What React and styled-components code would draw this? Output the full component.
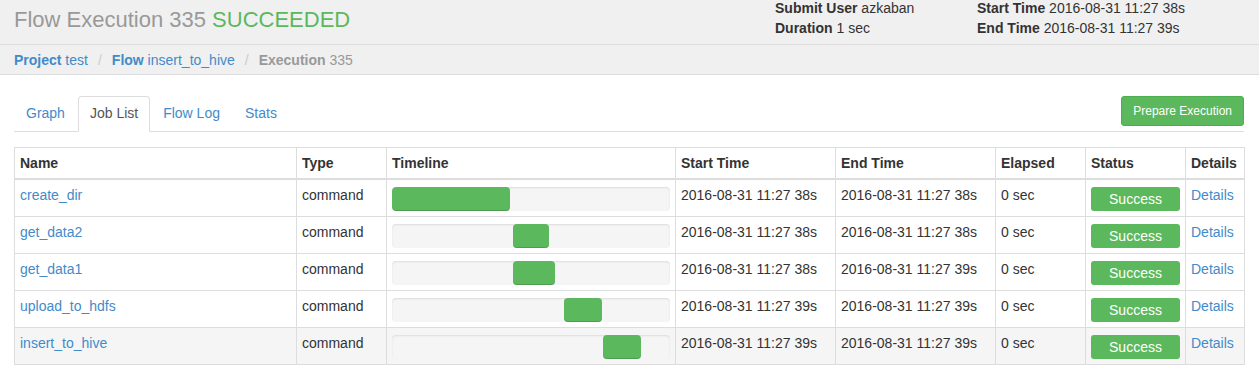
import React from 'react';
import styled, { createGlobalStyle } from 'styled-components';

const GlobalStyle = createGlobalStyle`
  * { box-sizing: border-box; }
  body {
    margin: 0;
    background: #fff;
    color: #333;
    font-family: "Liberation Sans", Arial, sans-serif;
    font-size: 14px;
    line-height: 20px;
  }
`;

const Header = styled.div`
  display: grid;
  grid-template-columns: 761px 202px auto;
  height: 45px;
  padding: 0 14px;
  background: #f0f0f0;
  border-bottom: 1px solid #ddd;
`;

const Title = styled.h1`
  margin: 8px 0 0;
  font-size: 22px;
  line-height: 24px;
  font-weight: normal;
  color: #999;
`;

const Succeeded = styled.span`
  color: #5cb85c;
`;

const InfoCol = styled.div`
  margin-top: -2px;
  white-space: nowrap;
`;

const Label = styled.strong`
  font-weight: bold;
`;

const Crumbs = styled.div`
  height: 30px;
  padding: 5px 14px 4px;
  background: #f0f0f0;
  border-bottom: 1px solid #ddd;
`;

const CrumbLink = styled.a`
  color: #428bca;
  text-decoration: none;
`;

const Active = styled.span`
  color: #999;
`;

const Sep = styled.span`
  padding: 0 10px;
  color: #ccc;
`;

const Main = styled.div`
  padding: 21px 15px 0 14px;
`;

const Nav = styled.div`
  display: flex;
  justify-content: space-between;
  align-items: flex-start;
  height: 36px;
  border-bottom: 1px solid #ddd;
`;

const Tabs = styled.div`
  display: flex;
`;

const Tab = styled.a`
  display: block;
  margin-right: 1px;
  padding: 6px 11px 8px;
  border: 1px solid transparent;
  border-radius: 4px 4px 0 0;
  color: ${p => (p.$active ? '#555' : '#428bca')};
  background: ${p => (p.$active ? '#fff' : 'transparent')};
  border-color: ${p => (p.$active ? '#ddd #ddd transparent' : 'transparent')};
  text-decoration: none;
  cursor: pointer;
`;

const Button = styled.button`
  padding: 5px 11px;
  border: 1px solid #4cae4c;
  border-radius: 3px;
  background: #5cb85c;
  color: #fff;
  font-family: inherit;
  font-size: 12px;
  line-height: 18px;
`;

const Table = styled.table`
  width: 100%;
  margin-top: 15px;
  border-collapse: collapse;
  table-layout: fixed;
  border: 1px solid #ddd;
`;

const Col = styled.col`
  width: ${p => p.$w}px;
`;

const Th = styled.th`
  padding: 5px;
  border: 1px solid #ddd;
  border-bottom: 2px solid #ddd;
  text-align: left;
  font-weight: bold;
  white-space: nowrap;
`;

const Row = styled.tr`
  background: ${p => (p.$hover ? '#f5f5f5' : '#fff')};
`;

const Td = styled.td`
  padding: 5px;
  border: 1px solid #ddd;
  vertical-align: top;
  white-space: nowrap;
`;

const Link = styled.a`
  color: #428bca;
  text-decoration: none;
`;

const Track = styled.div`
  display: flex;
  height: 24px;
  margin-top: 2px;
  border-radius: 4px;
  background: #f5f5f5;
  box-shadow: inset 0 1px 2px rgba(0, 0, 0, 0.1);
  overflow: hidden;
`;

const Bar = styled.div`
  height: 100%;
  border-radius: 4px;
  background: #5cb85c;
  box-shadow: inset 0 -1px 0 rgba(0, 0, 0, 0.15);
`;

const Badge = styled.div`
  height: 24px;
  margin-top: 2px;
  border-radius: 3px;
  background: #5cb85c;
  color: #fff;
  line-height: 24px;
  text-align: center;
`;

const TRACK = 279;

const jobs = [
  { name: 'create_dir', start: '2016-08-31 11:27 38s', end: '2016-08-31 11:27 38s', left: 0, width: 118 },
  { name: 'get_data2', start: '2016-08-31 11:27 38s', end: '2016-08-31 11:27 38s', left: 121, width: 37 },
  { name: 'get_data1', start: '2016-08-31 11:27 38s', end: '2016-08-31 11:27 39s', left: 121, width: 43 },
  { name: 'upload_to_hdfs', start: '2016-08-31 11:27 39s', end: '2016-08-31 11:27 39s', left: 173, width: 38 },
  { name: 'insert_to_hive', start: '2016-08-31 11:27 39s', end: '2016-08-31 11:27 39s', left: 212, width: 38 },
];

const cols = [282, 90, 289, 160, 160, 90, 100, 59];

export default function App() {
  return (
    <>
      <GlobalStyle />
      <Header>
        <Title>
          Flow Execution 335 <Succeeded>SUCCEEDED</Succeeded>
        </Title>
        <InfoCol>
          <div><Label>Submit User</Label> azkaban</div>
          <div><Label>Duration</Label> 1 sec</div>
        </InfoCol>
        <InfoCol>
          <div><Label>Start Time</Label> 2016-08-31 11:27 38s</div>
          <div><Label>End Time</Label> 2016-08-31 11:27 39s</div>
        </InfoCol>
      </Header>
      <Crumbs>
        <CrumbLink href="#"><Label>Project</Label> test</CrumbLink>
        <Sep>/</Sep>
        <CrumbLink href="#"><Label>Flow</Label> insert_to_hive</CrumbLink>
        <Sep>/</Sep>
        <Active><Label>Execution</Label> 335</Active>
      </Crumbs>
      <Main>
        <Nav>
          <Tabs>
            <Tab>Graph</Tab>
            <Tab $active>Job List</Tab>
            <Tab>Flow Log</Tab>
            <Tab>Stats</Tab>
          </Tabs>
          <Button>Prepare Execution</Button>
        </Nav>
        <Table>
          <colgroup>
            {cols.map((w, i) => <Col key={i} $w={w} />)}
          </colgroup>
          <thead>
            <tr>
              <Th>Name</Th>
              <Th>Type</Th>
              <Th>Timeline</Th>
              <Th>Start Time</Th>
              <Th>End Time</Th>
              <Th>Elapsed</Th>
              <Th>Status</Th>
              <Th>Details</Th>
            </tr>
          </thead>
          <tbody>
            {jobs.map((job, i) => (
              <Row key={job.name} $hover={i === jobs.length - 1}>
                <Td><Link href="#">{job.name}</Link></Td>
                <Td>command</Td>
                <Td>
                  <Track>
                    <Bar
                      style={{
                        marginLeft: `${(job.left / TRACK) * 100}%`,
                        width: `${(job.width / TRACK) * 100}%`,
                      }}
                    />
                  </Track>
                </Td>
                <Td>{job.start}</Td>
                <Td>{job.end}</Td>
                <Td>0 sec</Td>
                <Td><Badge>Success</Badge></Td>
                <Td><Link href="#">Details</Link></Td>
              </Row>
            ))}
          </tbody>
        </Table>
      </Main>
    </>
  );
}
